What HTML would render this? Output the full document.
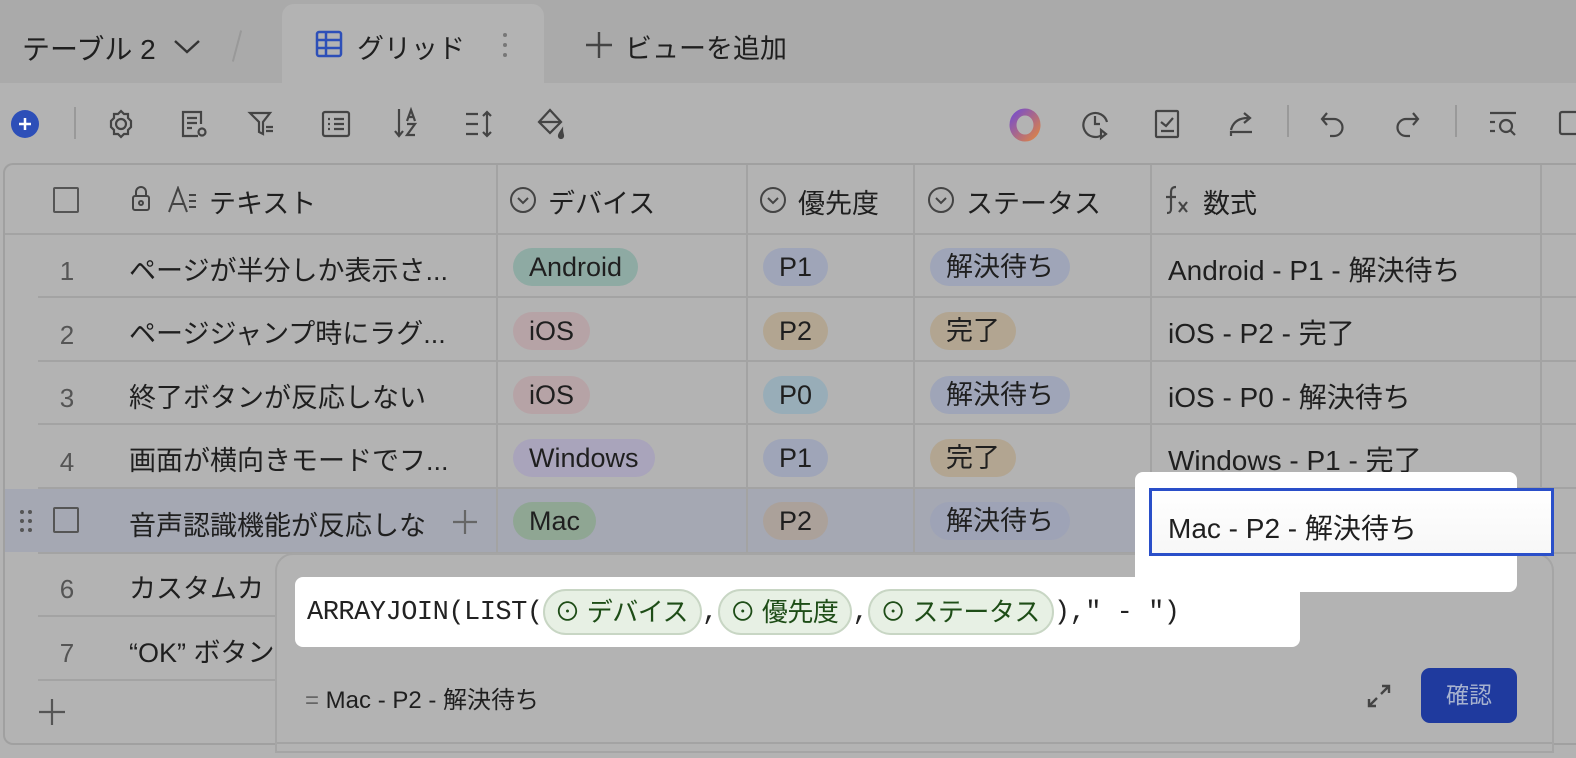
<!DOCTYPE html>
<html><head><meta charset="utf-8"><style>
*{box-sizing:border-box;margin:0;padding:0}
body{width:1576px;height:758px;overflow:hidden;background:#b3b3b3;font-family:"Liberation Sans","Noto Sans CJK JP",sans-serif;color:#1f1f1f;position:relative}
.abs{position:absolute}
.topbar{left:0;top:0;width:1576px;height:83px;background:#aaaaaa}
.tab{left:282px;top:4px;width:262px;height:80px;background:#b3b3b3;border-radius:12px 12px 0 0}
.t{position:absolute;font-size:27px;white-space:nowrap}
.lt{font-size:28px}
.grid{left:3px;top:163px;width:1600px;height:582px;border:2px solid #a0a0a0;border-radius:10px;border-right:none}
.hl{position:absolute;height:2px;background:#a3a3a3}
.vl{position:absolute;width:2px;background:#a3a3a3}
.tag{position:absolute;height:38px;border-radius:19px;font-size:27px;line-height:38px;padding:0 16px;white-space:nowrap}
.num{position:absolute;font-size:26px;color:#555;width:40px;text-align:center}
.ic{position:absolute}
.chip{display:inline-block;height:46px;line-height:42px;border:2px solid #c8d6c4;background:#e7f0e4;border-radius:23px;padding:0 12px 0 10px;color:#1e4d17;font-family:"Liberation Sans","Noto Sans CJK JP",sans-serif;font-size:26px;vertical-align:middle}
</style></head><body>
<div class="abs topbar"></div>
<div class="abs tab"></div>
<div class="t" style="left:22px;top:28px;font-size:28px">テーブル 2</div>
<svg class="ic" style="left:172px;top:36px" width="30" height="20"><path d="M3 5l12 11 12-11" fill="none" stroke="#333" stroke-width="2.4"/></svg>
<div class="abs" style="left:236px;top:30px;width:2px;height:32px;background:#999;transform:rotate(15deg)"></div>
<svg class="ic" style="left:315px;top:30px" width="28" height="28"><rect x="2" y="2" width="24" height="24" rx="2" fill="none" stroke="#2d4fb8" stroke-width="2.5"/><path d="M2 10h24M2 18h24M11 2v24" stroke="#2d4fb8" stroke-width="2.5"/></svg>
<div class="t" style="left:357px;top:27px">グリッド</div>
<svg class="ic" style="left:500px;top:30px" width="10" height="30"><circle cx="5" cy="5" r="2" fill="#777"/><circle cx="5" cy="15" r="2" fill="#777"/><circle cx="5" cy="25" r="2" fill="#777"/></svg>
<svg class="ic" style="left:585px;top:31px" width="28" height="28"><path d="M14 1v26M1 14h26" stroke="#444" stroke-width="2.4"/></svg>
<div class="t" style="left:625px;top:27px">ビューを追加</div>

<!-- toolbar -->
<svg class="ic" style="left:10px;top:109px" width="30" height="30"><circle cx="15" cy="15" r="14" fill="#2d4fb8"/><path d="M15 9v12M9 15h12" stroke="#fff" stroke-width="2.5"/></svg>
<div class="abs" style="left:74px;top:107px;width:2px;height:32px;background:#999"></div>
<svg class="ic" style="left:105px;top:108px" width="32" height="32" fill="none" stroke="#444" stroke-width="2.2"><circle cx="16" cy="16" r="5"/><path d="M16 3l3 3h4v4l3 3v6l-3 3v4h-4l-3 3-3-3H9v-4l-3-3v-6l3-3V6h4z"/></svg>
<svg class="ic" style="left:178px;top:108px" width="32" height="32" fill="none" stroke="#444" stroke-width="2.2"><path d="M20 28H5V4h18v12M9 10h10M9 15h10M9 20h5"/><circle cx="24" cy="24" r="3.5"/></svg>
<svg class="ic" style="left:246px;top:108px" width="32" height="32" fill="none" stroke="#444" stroke-width="2.2"><path d="M4 5h20l-7 9v12l-4-2V14z"/><path d="M20 19h7M20 23h7"/></svg>
<svg class="ic" style="left:320px;top:108px" width="32" height="32" fill="none" stroke="#444" stroke-width="2.2"><rect x="3" y="4" width="26" height="24" rx="2"/><path d="M8 11h2M14 11h10M8 16h2M14 16h10M8 21h2M14 21h10"/></svg>
<svg class="ic" style="left:393px;top:106px" width="32" height="34" fill="none" stroke="#444" stroke-width="2.2"><path d="M6 3v27M2 25l4 5 4-5M14 15l4-11 4 11M15 11h6M14 18h8l-8 11h8"/></svg>
<svg class="ic" style="left:463px;top:108px" width="32" height="32" fill="none" stroke="#444" stroke-width="2.2"><path d="M3 6h12M3 16h12M3 26h12M24 4v24M20 8l4-4 4 4M20 24l4 4 4-4"/></svg>
<svg class="ic" style="left:535px;top:107px" width="32" height="34" fill="none" stroke="#444" stroke-width="2.2"><path d="M15 3L4 15l11 11 11-11z"/><path d="M4 15h22"/><path d="M27 23c-2 3-3 4-3 6a2 2 0 004 0c0-2-1-3-1-6z" fill="#444"/></svg>
<svg class="ic" style="left:1008px;top:108px" width="34" height="34"><defs><linearGradient id="g" x1="0" y1="0" x2="1" y2="1"><stop offset="0" stop-color="#7a4fc8"/><stop offset="1" stop-color="#d9824a"/></linearGradient></defs><ellipse cx="17" cy="17" rx="12" ry="13" fill="none" stroke="url(#g)" stroke-width="7"/></svg>
<svg class="ic" style="left:1080px;top:108px" width="32" height="34" fill="none" stroke="#444" stroke-width="2.2"><path d="M22 27A12 12 0 1 1 27 14"/><path d="M15 8v8h5M21 22l5 4-5 4z"/></svg>
<svg class="ic" style="left:1152px;top:108px" width="32" height="32" fill="none" stroke="#444" stroke-width="2.2"><rect x="4" y="3" width="22" height="26" rx="1"/><path d="M9 14l5 4 7-8M9 23h13"/></svg>
<svg class="ic" style="left:1225px;top:108px" width="34" height="32" fill="none" stroke="#444" stroke-width="2.2"><path d="M6 28v-4h21M6 22c2-8 8-12 17-12M19 5l6 5-6 5"/></svg>
<div class="abs" style="left:1287px;top:105px;width:2px;height:32px;background:#999"></div>
<svg class="ic" style="left:1318px;top:108px" width="32" height="32" fill="none" stroke="#444" stroke-width="2.2"><path d="M9 5L4 11l5 6M4 11h12a8 8 0 010 17h-4"/></svg>
<svg class="ic" style="left:1390px;top:108px" width="32" height="32" fill="none" stroke="#444" stroke-width="2.2"><path d="M23 5l5 6-5 6M28 11H16a8 8 0 000 17h4"/></svg>
<div class="abs" style="left:1455px;top:105px;width:2px;height:32px;background:#999"></div>
<svg class="ic" style="left:1487px;top:108px" width="34" height="32" fill="none" stroke="#444" stroke-width="2.2"><path d="M3 5h26M3 14h5M3 23h5"/><circle cx="19" cy="18" r="6"/><path d="M23 22l5 5"/></svg>
<svg class="ic" style="left:1558px;top:108px" width="20" height="32" fill="none" stroke="#444" stroke-width="2.2"><rect x="2" y="4" width="24" height="22" rx="2"/></svg>

<!-- grid -->
<div class="abs grid"></div>
<div class="abs" style="left:5px;top:489px;width:1140px;height:63px;background:#a5a8b3"></div>
<div class="hl" style="left:5px;top:233px;width:1571px"></div>
<div class="hl" style="left:38px;top:296px;width:1538px"></div>
<div class="hl" style="left:38px;top:360px;width:1538px"></div>
<div class="hl" style="left:38px;top:423px;width:1538px"></div>
<div class="hl" style="left:38px;top:487px;width:1538px"></div>
<div class="hl" style="left:38px;top:552px;width:1538px"></div>
<div class="hl" style="left:38px;top:615px;width:300px"></div>
<div class="hl" style="left:38px;top:679px;width:300px"></div>
<div class="vl" style="left:496px;top:165px;height:388px"></div>
<div class="vl" style="left:746px;top:165px;height:388px"></div>
<div class="vl" style="left:913px;top:165px;height:388px"></div>
<div class="vl" style="left:1150px;top:165px;height:388px"></div>
<div class="vl" style="left:1540px;top:165px;height:388px"></div>

<!-- header -->
<div class="abs" style="left:53px;top:187px;width:26px;height:26px;border:2px solid #555;border-radius:2px"></div>
<svg class="ic" style="left:130px;top:185px" width="22" height="28" fill="none" stroke="#444" stroke-width="2"><rect x="3" y="11" width="16" height="14" rx="2"/><path d="M6 11V7a5 5 0 0110 0v4"/><circle cx="11" cy="18" r="2"/></svg>
<svg class="ic" style="left:167px;top:186px" width="38" height="28" fill="none" stroke="#444" stroke-width="2"><path d="M2 26L11 2l9 24M5 18h12M22 9h7M22 15h7M22 21h7"/></svg>
<div class="t" style="left:209px;top:182px">テキスト</div>
<svg class="ic" style="left:509px;top:186px" width="28" height="28" fill="none" stroke="#444" stroke-width="2"><circle cx="14" cy="14" r="12"/><path d="M9 12l5 5 5-5"/></svg>
<div class="t" style="left:548px;top:182px">デバイス</div>
<svg class="ic" style="left:759px;top:186px" width="28" height="28" fill="none" stroke="#444" stroke-width="2"><circle cx="14" cy="14" r="12"/><path d="M9 12l5 5 5-5"/></svg>
<div class="t" style="left:798px;top:182px">優先度</div>
<svg class="ic" style="left:927px;top:186px" width="28" height="28" fill="none" stroke="#444" stroke-width="2"><circle cx="14" cy="14" r="12"/><path d="M9 12l5 5 5-5"/></svg>
<div class="t" style="left:966px;top:182px">ステータス</div>
<svg class="ic" style="left:1162px;top:184px" width="34" height="32" fill="none" stroke="#444" stroke-width="2.2"><path d="M14 3c-4 0-5 2-5 6v16c0 3-1 4-4 4M4 13h10"/><path d="M17 18l8 10M25 18l-8 10"/></svg>
<div class="t" style="left:1203px;top:182px">数式</div>

<!-- rows -->
<div class="num" style="left:47px;top:256px">1</div>
<div class="num" style="left:47px;top:320px">2</div>
<div class="num" style="left:47px;top:383px">3</div>
<div class="num" style="left:47px;top:447px">4</div>
<div class="num" style="left:47px;top:574px">6</div>
<div class="num" style="left:47px;top:638px">7</div>
<svg class="ic" style="left:18px;top:508px" width="16" height="26" fill="#555"><circle cx="4" cy="4" r="2"/><circle cx="12" cy="4" r="2"/><circle cx="4" cy="13" r="2"/><circle cx="12" cy="13" r="2"/><circle cx="4" cy="22" r="2"/><circle cx="12" cy="22" r="2"/></svg>
<div class="abs" style="left:53px;top:507px;width:26px;height:26px;border:2px solid #555;border-radius:2px"></div>
<svg class="ic" style="left:38px;top:698px" width="28" height="28"><path d="M14 1v26M1 14h26" stroke="#555" stroke-width="2.2"/></svg>

<div class="t" style="left:129px;top:249px">ページが半分しか表示さ...</div>
<div class="t" style="left:129px;top:312px">ページジャンプ時にラグ...</div>
<div class="t" style="left:129px;top:376px">終了ボタンが反応しない</div>
<div class="t" style="left:129px;top:439px">画面が横向きモードでフ...</div>
<div class="t" style="left:129px;top:504px;width:298px;overflow:hidden">音声認識機能が反応しない</div>
<svg class="ic" style="left:451px;top:508px" width="28" height="28"><path d="M14 2v24M2 14h24" stroke="#666" stroke-width="2.2"/></svg>
<div class="t" style="left:129px;top:567px">カスタムカ</div>
<div class="t" style="left:129px;top:631px">“OK” ボタン</div>

<div class="tag lt" style="left:513px;top:248px;background:#8eaaa3">Android</div>
<div class="tag lt" style="left:513px;top:312px;background:#b6a3a6">iOS</div>
<div class="tag lt" style="left:513px;top:376px;background:#b6a3a6">iOS</div>
<div class="tag lt" style="left:513px;top:439px;background:#a9a4bb">Windows</div>
<div class="tag lt" style="left:513px;top:502px;background:#8fa693">Mac</div>
<div class="tag lt" style="left:763px;top:248px;background:#9fa5b8">P1</div>
<div class="tag lt" style="left:763px;top:312px;background:#b2a591">P2</div>
<div class="tag lt" style="left:763px;top:376px;background:#98adb8">P0</div>
<div class="tag lt" style="left:763px;top:439px;background:#9fa5b8">P1</div>
<div class="tag lt" style="left:763px;top:502px;background:#aba19a">P2</div>
<div class="tag" style="left:930px;top:248px;background:#9fa5b8">解決待ち</div>
<div class="tag" style="left:930px;top:312px;background:#b2a591">完了</div>
<div class="tag" style="left:930px;top:376px;background:#9fa5b8">解決待ち</div>
<div class="tag" style="left:930px;top:439px;background:#b2a591">完了</div>
<div class="tag" style="left:930px;top:502px;background:#9ea3b6">解決待ち</div>
<div class="t lt" style="left:1168px;top:249px">Android - P1 - 解決待ち</div>
<div class="t lt" style="left:1168px;top:312px">iOS - P2 - 完了</div>
<div class="t lt" style="left:1168px;top:376px">iOS - P0 - 解決待ち</div>
<div class="t lt" style="left:1168px;top:439px">Windows - P1 - 完了</div>

<!-- popup -->
<div class="abs" style="left:275px;top:553px;width:1279px;height:200px;background:#b3b3b3;border:2px solid #a5a5a5;border-radius:18px 18px 0 0"></div>
<div class="abs" style="left:277px;top:742px;width:1275px;height:2px;background:#a3a3a3"></div>
<div class="abs" style="left:1135px;top:472px;width:382px;height:120px;background:#fff;border-radius:8px"></div>
<div class="abs" style="left:1149px;top:488px;width:405px;height:68px;border:3px solid #2a4fc9;background:linear-gradient(#fff,#f7f7f7)"></div>
<div class="t lt" style="left:1168px;top:507px">Mac - P2 - 解決待ち</div>
<div class="abs" style="left:295px;top:577px;width:1005px;height:70px;background:#fff;border-radius:8px"></div>
<div class="abs" style="left:307px;top:589px;font-family:'Liberation Mono',monospace;font-size:27px;white-space:nowrap;color:#222;line-height:46px;letter-spacing:-0.5px">ARRAYJOIN(LIST(<span class="chip">⊙ デバイス</span>,<span class="chip">⊙ 優先度</span>,<span class="chip">⊙ ステータス</span>),"&nbsp;-&nbsp;")</div>
<div class="t" style="left:305px;top:680px;font-size:24px"><span style="color:#666">=</span> Mac - P2 - 解決待ち</div>
<svg class="ic" style="left:1366px;top:683px" width="26" height="26" fill="none" stroke="#444" stroke-width="2.4"><path d="M15 11l8-8M16 3h7v7M11 15l-8 8M3 16v7h7"/></svg>
<div class="abs" style="left:1421px;top:668px;width:96px;height:55px;background:#1f3a9e;border-radius:9px;color:#a7b2cf;font-size:23px;line-height:55px;text-align:center">確認</div>
</body></html>
